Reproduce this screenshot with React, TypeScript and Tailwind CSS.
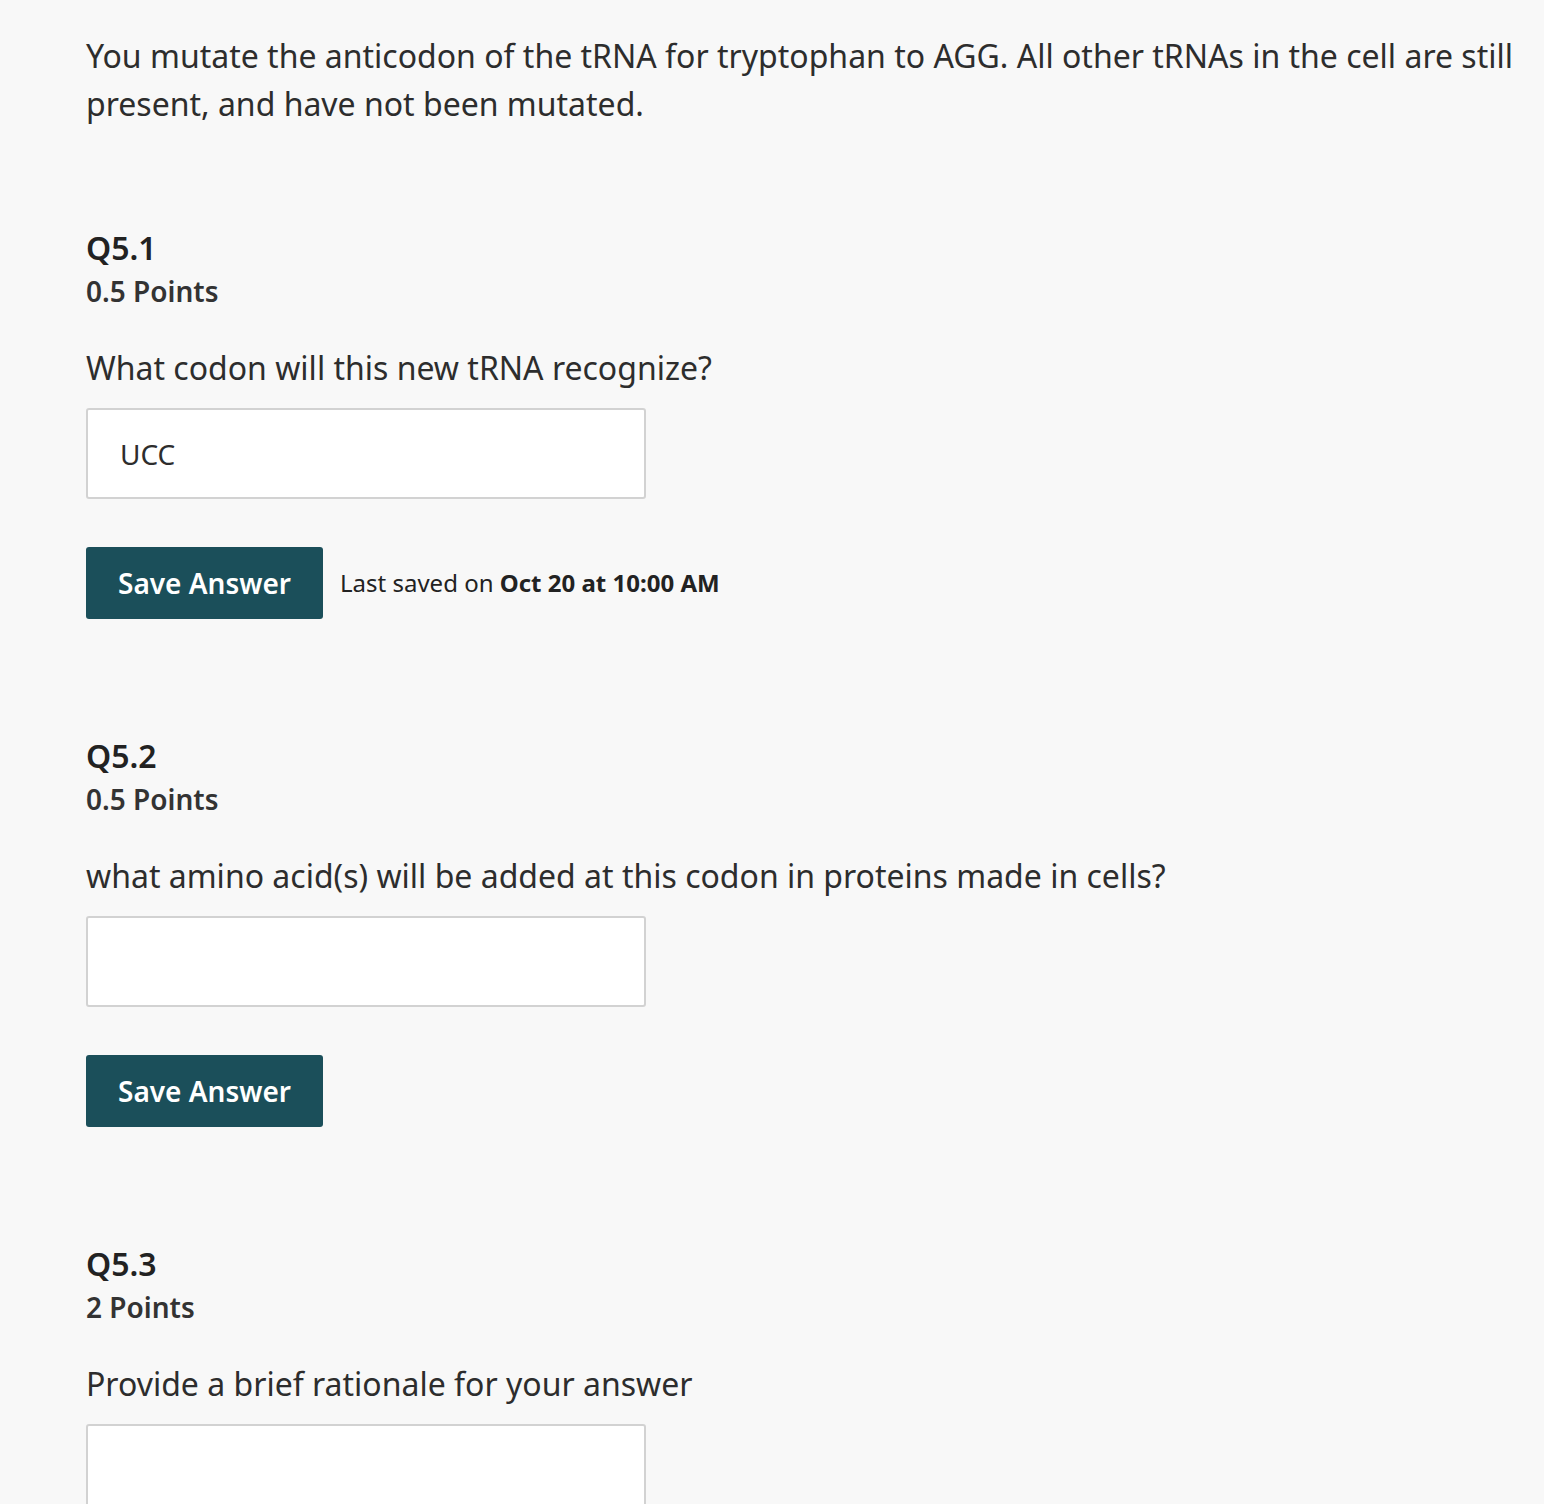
import React from "react";

const font = { fontFamily: '"Noto Sans", "Open Sans", sans-serif' };

function Question({
  num,
  points,
  prompt,
  value,
  saved,
  last,
  first,
}: {
  num: string;
  points: string;
  prompt: string;
  value?: string;
  saved?: boolean;
  last?: boolean;
  first?: boolean;
}) {
  return (
    <section className={first ? "mt-[100px]" : "mt-[117px]"}>
      <h2 className="text-[32px] leading-[40px] font-semibold text-[#222]">{num}</h2>
      <div className="text-[28px] leading-[36px] font-semibold text-[#333] mt-[5px]">{points}</div>
      <p className="mt-[35px] text-[32px] leading-[48px] text-[#2d2d2d]">{prompt}</p>
      <div className="mt-[16px] w-[560px] h-[91px] bg-white border-2 border-[#d2d2d2] rounded-[3px] flex items-center px-[32px] text-[28px] text-[#2d2d2d]">
        {value}
      </div>
      {!last && (
        <div className="mt-[48px] flex items-center">
          <button className="w-[237px] h-[72px] bg-[#1b4f5a] text-white rounded-[3px] text-[28px] font-semibold">
            Save Answer
          </button>
          {saved && (
            <span className="ml-[17px] text-[24px] text-[#222]">
              Last saved on <span className="font-bold">Oct 20 at 10:00 AM</span>
            </span>
          )}
        </div>
      )}
    </section>
  );
}

export default function App() {
  return (
    <div className="h-[1504px] bg-[#f8f8f8] pl-[86px] pt-[32px] overflow-hidden" style={font}>
      <p className="text-[32px] leading-[48px] text-[#2d2d2d] w-[1450px]">
        You mutate the anticodon of the tRNA for tryptophan to AGG. All other tRNAs in the cell are still present, and have not been mutated.
      </p>
      <Question first num="Q5.1" points="0.5 Points" prompt="What codon will this new tRNA recognize?" value="UCC" saved />
      <Question num="Q5.2" points="0.5 Points" prompt="what amino acid(s) will be added at this codon in proteins made in cells?" />
      <Question num="Q5.3" points="2 Points" prompt="Provide a brief rationale for your answer" last />
    </div>
  );
}
